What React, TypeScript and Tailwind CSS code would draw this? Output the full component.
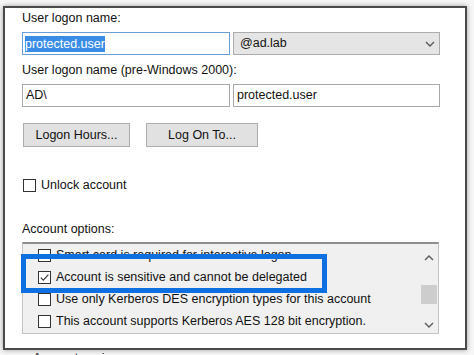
import React from "react";

function Check({ checked }: { checked?: boolean }) {
  return (
    <div className="w-[13px] h-[13px] shrink-0 border border-[#333333] bg-white flex items-center justify-center">
      {checked && (
        <svg width="11" height="11" viewBox="0 0 11 11">
          <path d="M1.8 5.6 L4.3 8.1 L9.4 2.6" fill="none" stroke="#333" strokeWidth="1.1" />
        </svg>
      )}
    </div>
  );
}

function Chevron({ up }: { up?: boolean }) {
  return (
    <svg width="10" height="6" viewBox="0 0 10 6">
      <path
        d={up ? "M1 5 L5 1 L9 5" : "M1 1 L5 5 L9 1"}
        fill="none"
        stroke="#5a5a5a"
        strokeWidth="1.4"
      />
    </svg>
  );
}

export default function App() {
  const items = [
    { t: "Smart card is required for interactive logon", c: false },
    { t: "Account is sensitive and cannot be delegated", c: true },
    { t: "Use only Kerberos DES encryption types for this account", c: false },
    { t: "This account supports Kerberos AES 128 bit encryption.", c: false },
  ];
  return (
    <div className="w-[474px] h-[355px] overflow-hidden bg-[#f6f6f6] relative font-['Liberation_Sans',Arial,sans-serif] text-[12.5px] text-[#111111]">
      <div className="ml-[3px] mt-[6px] w-[464px] h-[344px] border-2 border-[#4a4a4a] bg-white shadow-[0_0_5px_rgba(0,0,0,0.35)] pl-[17px] pt-[2px] flex flex-col">
        <div className="h-[16px] leading-[16px]">User logon name:</div>
        <div className="mt-[6px] flex gap-[3px] h-[23px]">
          <div className="w-[208px] h-[23px] border border-[#6a9fd6] bg-white pl-[2px] flex items-center">
            <span className="bg-[#3a8de6] text-white leading-[16px]">protected.user</span>
          </div>
          <div className="w-[207px] h-[23px] border border-[#acacac] bg-[#e5e5e5] pl-[6px] pr-[4px] flex items-center justify-between">
            <span>@ad.lab</span>
            <Chevron />
          </div>
        </div>
        <div className="mt-[7px] h-[16px] leading-[16px]">User logon name (pre-Windows 2000):</div>
        <div className="mt-[6px] flex gap-[3px] h-[23px]">
          <div className="w-[208px] h-[23px] border border-[#a8a8a8] bg-white pl-[3px] flex items-center">AD\</div>
          <div className="w-[207px] h-[23px] border border-[#a8a8a8] bg-white pl-[3px] flex items-center">protected.user</div>
        </div>
        <div className="mt-[16px] flex gap-[16px] ml-[1px]">
          <div className="w-[107px] h-[24px] border border-[#adadad] bg-[#e1e1e1] flex items-center justify-center">Logon Hours...</div>
          <div className="w-[112px] h-[24px] border border-[#adadad] bg-[#e1e1e1] flex items-center justify-center">Log On To...</div>
        </div>
        <div className="mt-[30px] h-[16px] flex items-center gap-[5px] ml-[1px]">
          <Check />
          <span>Unlock account</span>
        </div>
        <div className="mt-[28px] h-[16px] leading-[16px]">Account options:</div>
        <div className="mt-[5px] w-[417px] h-[92px] border border-[#c4c4c4] border-t-2 border-t-[#8e8e8e] bg-[#f0f0f0] flex overflow-hidden">
          <div className="flex-1 pl-[15px] flex flex-col">
            {items.map((it) => (
              <div key={it.t} className="h-[22px] flex items-center gap-[5px] whitespace-nowrap">
                <Check checked={it.c} />
                <span>{it.t}</span>
              </div>
            ))}
          </div>
          <div className="w-[17px] mr-[1px] flex flex-col items-center">
            <div className="h-[25px] flex items-center justify-center pt-[3px]">
              <Chevron up />
            </div>
            <div className="mt-[16px] w-[16px] h-[19px] bg-[#cdcdcd]" />
            <div className="mt-[16px] h-[10px] flex items-center justify-center">
              <Chevron />
            </div>
          </div>
        </div>
      </div>
      <div className="absolute left-[21px] top-[254px] w-[306px] h-[39px] border-[5px] border-[#0d6fe0]" />
      <div className="absolute left-[33px] top-[351px] text-[12.5px] leading-[14px] text-[#222]">Account expires</div>
    </div>
  );
}
